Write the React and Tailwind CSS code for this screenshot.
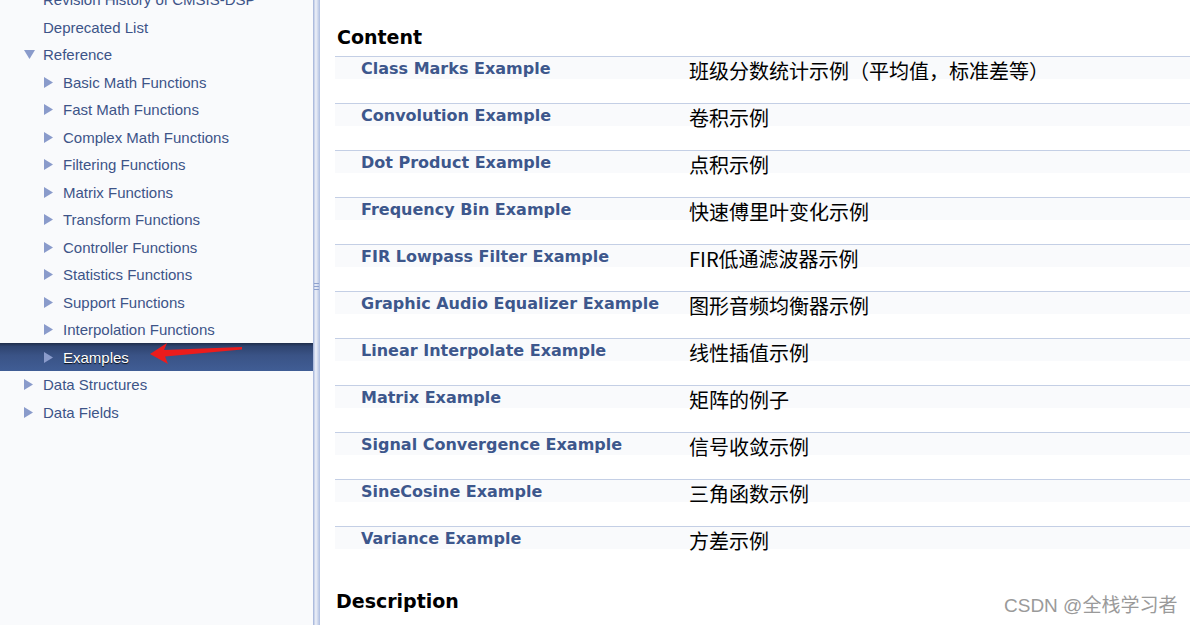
import React from "react";

const navItems = [
  { label: "Revision History of CMSIS-DSP", level: 0, arrow: null },
  { label: "Deprecated List", level: 0, arrow: null },
  { label: "Reference", level: 0, arrow: "down" },
  { label: "Basic Math Functions", level: 1, arrow: "right" },
  { label: "Fast Math Functions", level: 1, arrow: "right" },
  { label: "Complex Math Functions", level: 1, arrow: "right" },
  { label: "Filtering Functions", level: 1, arrow: "right" },
  { label: "Matrix Functions", level: 1, arrow: "right" },
  { label: "Transform Functions", level: 1, arrow: "right" },
  { label: "Controller Functions", level: 1, arrow: "right" },
  { label: "Statistics Functions", level: 1, arrow: "right" },
  { label: "Support Functions", level: 1, arrow: "right" },
  { label: "Interpolation Functions", level: 1, arrow: "right" },
  { label: "Examples", level: 1, arrow: "right", selected: true },
  { label: "Data Structures", level: 0, arrow: "right" },
  { label: "Data Fields", level: 0, arrow: "right" },
];

const rows = [
  ["Class Marks Example", "班级分数统计示例（平均值，标准差等）"],
  ["Convolution Example", "卷积示例"],
  ["Dot Product Example", "点积示例"],
  ["Frequency Bin Example", "快速傅里叶变化示例"],
  ["FIR Lowpass Filter Example", "FIR低通滤波器示例"],
  ["Graphic Audio Equalizer Example", "图形音频均衡器示例"],
  ["Linear Interpolate Example", "线性插值示例"],
  ["Matrix Example", "矩阵的例子"],
  ["Signal Convergence Example", "信号收敛示例"],
  ["SineCosine Example", "三角函数示例"],
  ["Variance Example", "方差示例"],
];

function Arrow({ dir }) {
  if (dir === "down") {
    return (
      <svg width="11" height="9" viewBox="0 0 11 9">
        <polygon points="0,0 11,0 5.5,9" fill="#8a9bcb" />
      </svg>
    );
  }
  return (
    <svg width="9" height="11" viewBox="0 0 9 11">
      <polygon points="0,0 9,5.5 0,11" fill="#8a9bcb" />
    </svg>
  );
}

function NavRow({ item }) {
  const indent = item.level === 0 ? "pl-[24px]" : "pl-[44px]";
  return (
    <div
      className={
        "relative flex h-[27.5px] items-center " +
        indent +
        (item.selected
          ? " bg-[linear-gradient(to_bottom,#1f2d4a_0%,#2f4470_12%,#3a5386_45%,#405d95_100%)]"
          : "")
      }
    >
      <div className="flex w-[19px] items-center">
        {item.arrow && <Arrow dir={item.arrow} />}
      </div>
      <span
        className={
          "whitespace-nowrap text-[15px] leading-none " +
          (item.selected
            ? "text-white [text-shadow:0_1px_1px_rgba(0,0,0,0.9)]"
            : "text-[#3d5488]")
        }
      >
        {item.label}
      </span>
    </div>
  );
}

export default function App() {
  return (
    <div
      className="relative flex h-[625px] w-[1190px] overflow-hidden bg-white"
      style={{ fontFamily: '"Liberation Sans", Arial, "Noto Sans CJK SC", sans-serif' }}
    >
      {/* Sidebar */}
      <div className="relative h-full w-[313px] shrink-0 overflow-hidden bg-[#f9fafc]">
        <div className="mt-[-14.25px] flex flex-col">
          {navItems.map((it) => (
            <NavRow key={it.label} item={it} />
          ))}
        </div>
        {/* red annotation arrow */}
        <svg
          className="absolute left-[148px] top-[340px]"
          width="98"
          height="28"
          viewBox="0 0 98 28"
        >
          <polygon
            points="2,14 19,3 16,10 94,7 94,9.5 17,16.5 20,24"
            fill="#ec1c1c"
          />
        </svg>
      </div>

      {/* Splitter */}
      <div className="flex h-full w-[7px] shrink-0 flex-col bg-[linear-gradient(to_right,#9eafd6_0%,#c8d2ea_20%,#eef1f8_40%,#d3dbee_65%,#adbde0_100%)]">
        <div className="h-[283px]" />
        <div className="flex flex-col gap-[2px] px-[1px]">
          <div className="h-px bg-[#8ea1cd]" />
          <div className="h-px bg-[#8ea1cd]" />
          <div className="h-px bg-[#8ea1cd]" />
        </div>
      </div>

      {/* Content */}
      <div className="flex min-w-0 flex-1 flex-col pl-[15px]">
        <h2
          className="ml-[2px] mt-[25px] h-[24px] text-[19px] font-bold leading-[24px] text-black"
          style={{ fontFamily: '"DejaVu Sans", Verdana, sans-serif' }}
        >
          Content
        </h2>
        <div className="mt-[7px] flex flex-col">
          {rows.map(([en, zh]) => (
            <div key={en} className="h-[47px] border-t border-[#c4cfe5]">
              <div className="flex h-[22px] bg-[#f9fafc]">
                <div
                  className="w-[354px] shrink-0 whitespace-nowrap pl-[26px] pt-[1px] text-[16px] font-bold leading-[22px] text-[#3d578c]"
                  style={{ fontFamily: '"DejaVu Sans", Verdana, sans-serif' }}
                >
                  {en}
                </div>
                <div
                  className="whitespace-nowrap pt-[2px] text-[20px] leading-[24px] text-black"
                  style={{ fontFamily: '"Noto Sans CJK SC", "Liberation Sans", sans-serif' }}
                >
                  {zh}
                </div>
              </div>
            </div>
          ))}
        </div>
        <h2
          className="ml-[1px] mt-[16px] h-[24px] text-[19px] font-bold leading-[24px] text-black"
          style={{ fontFamily: '"DejaVu Sans", Verdana, sans-serif' }}
        >
          Description
        </h2>
      </div>

      {/* watermark */}
      <div
        className="absolute left-[1004px] top-[594px] whitespace-nowrap text-[19px] leading-[24px] text-[#9a9a9a]"
        style={{ fontFamily: '"Liberation Sans", "Noto Sans CJK SC", sans-serif' }}
      >
        CSDN @全栈学习者
      </div>
    </div>
  );
}
